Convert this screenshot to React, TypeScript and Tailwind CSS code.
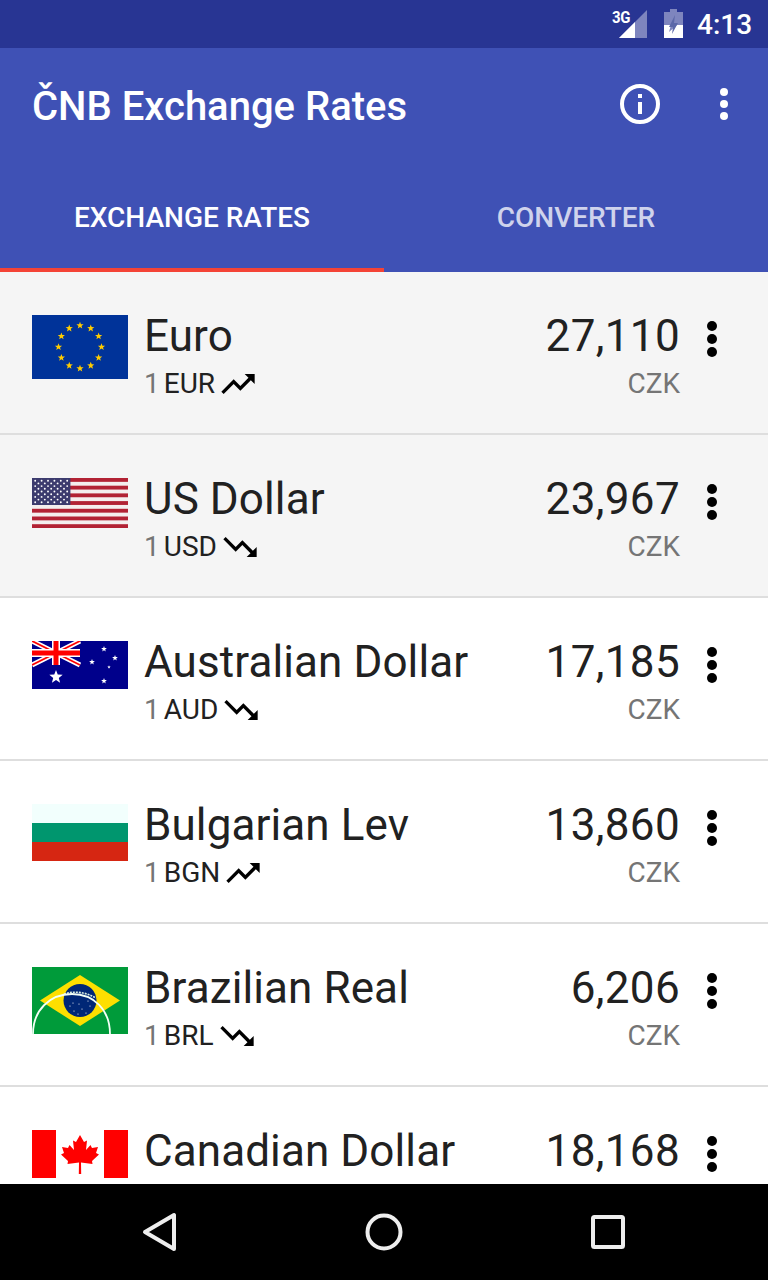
import React from 'react';

type Rate = {
  name: string;
  code: string;
  value: string;
  up: boolean;
  flag: React.ReactNode;
};

const star = (cx: number, cy: number, r: number) => {
  const pts: string[] = [];
  for (let i = 0; i < 10; i++) {
    const rad = i % 2 === 0 ? r : r * 0.42;
    const a = (Math.PI / 5) * i - Math.PI / 2;
    pts.push(`${(cx + rad * Math.cos(a)).toFixed(2)},${(cy + rad * Math.sin(a)).toFixed(2)}`);
  }
  return pts.join(' ');
};

const EuFlag = () => (
  <svg width="96" height="64" viewBox="0 0 96 64" className="block">
    <rect width="96" height="64" fill="#003399" />
    {Array.from({ length: 12 }).map((_, i) => {
      const a = (Math.PI / 6) * i;
      return <polygon key={i} points={star(48 + 21.5 * Math.sin(a), 32 - 21.5 * Math.cos(a), 3.8)} fill="#ffcc00" />;
    })}
  </svg>
);

const UsFlag = () => (
  <svg width="96" height="50" viewBox="0 0 96 50" className="block">
    <rect width="96" height="50" fill="#f4eeee" />
    {[0, 1, 2, 3, 4, 5, 6].map((i) => (
      <rect key={i} x="0" y={i * 7.7} width="96" height="3.85" fill="#b22234" />
    ))}
    <rect width="38.4" height="27" fill="#3c3b6e" />
    {Array.from({ length: 9 }).map((_, r) =>
      Array.from({ length: r % 2 === 0 ? 6 : 5 }).map((_, c) => (
        <circle key={`${r}-${c}`} cx={(r % 2 === 0 ? 3.2 : 6.4) + c * 6.4} cy={2.7 + r * 2.7} r="0.95" fill="#ffffff" />
      )),
    )}
  </svg>
);

const AuFlag = () => (
  <svg width="96" height="48" viewBox="0 0 96 48" className="block">
    <rect width="96" height="48" fill="#00008b" />
    <path d="M0 0L48 24M48 0L0 24" stroke="#ffffff" strokeWidth="5" />
    <path d="M0 0L48 24M48 0L0 24" stroke="#ff0000" strokeWidth="1.8" />
    <path d="M24 0V24M0 12H48" stroke="#ffffff" strokeWidth="8" />
    <path d="M24 0V24M0 12H48" stroke="#ff0000" strokeWidth="5" />
    <polygon points={star(24, 36, 7)} fill="#ffffff" />
    <polygon points={star(72, 8, 3)} fill="#ffffff" />
    <polygon points={star(60, 21, 3)} fill="#ffffff" />
    <polygon points={star(83, 17, 3)} fill="#ffffff" />
    <polygon points={star(77, 26, 1.8)} fill="#ffffff" />
    <polygon points={star(72, 40, 3)} fill="#ffffff" />
  </svg>
);

const BgFlag = () => (
  <svg width="96" height="57" viewBox="0 0 96 57" className="block">
    <rect width="96" height="19" fill="#f2fffd" />
    <rect y="19" width="96" height="19" fill="#00966e" />
    <rect y="38" width="96" height="19" fill="#d62612" />
  </svg>
);

const BrFlag = () => (
  <svg width="96" height="67" viewBox="0 0 96 67" className="block">
    <rect width="96" height="67" fill="#009b3a" />
    <polygon points="48,8 88,33.5 48,59 8,33.5" fill="#fedf00" />
    <circle cx="48" cy="33.5" r="16.5" fill="#002776" />
    <path d="M32 27Q48 22 64 31" stroke="#d8eee0" strokeWidth="1.6" fill="none" strokeDasharray="2 1" />
    <path d="M1 67C1 43 18 27 40 27C62 27 78 43 78 67" stroke="#f2fff6" strokeWidth="1.8" fill="none" />
    {[[38, 39], [42, 44], [47, 37], [50, 42], [54, 46], [58, 39], [46, 47], [41, 36], [56, 34]].map(([x, y], i) => (
      <circle key={i} cx={x} cy={y} r="0.6" fill="#ffffff" />
    ))}
  </svg>
);

const CaFlag = () => (
  <svg width="96" height="48" viewBox="0 0 96 48" className="block">
    <rect width="96" height="48" fill="#ffffff" />
    <rect width="24" height="48" fill="#ff0000" />
    <rect x="72" width="24" height="48" fill="#ff0000" />
    <path
      d="M48 5L52 12L55 10.5L54 20L58.5 15L60 18L66 17L64 23L67 24.5L60 31L60.5 34L49 32.5L49.2 44H46.8L47 32.5L35.5 34L36 31L29 24.5L32 23L30 17L36 18L37.5 15L42 20L41 10.5L44 12Z"
      fill="#ff0000"
    />
  </svg>
);

const TrendIcon = ({ up }: { up: boolean }) => (
  <svg width="40" height="40" viewBox="0 0 24 24" fill="#000000" className="ml-[3px] -my-2 shrink-0">
    {up ? (
      <path d="M16 6l2.29 2.29-4.88 4.88-4-4L2 16.59 3.41 18l6-6 4 4 6.3-6.29L22 12V6z" />
    ) : (
      <path d="M16 18l2.29-2.29-4.88-4.88-4 4L2 7.41 3.41 6l6 6 4-4 6.3 6.29L22 12v6z" />
    )}
  </svg>
);

const Dots = ({ r, gap }: { r: number; gap: number }) => (
  <svg width={r * 2} height={gap * 2 + r * 2} viewBox={`0 0 ${r * 2} ${gap * 2 + r * 2}`} className="block">
    <circle cx={r} cy={r} r={r} fill="currentColor" />
    <circle cx={r} cy={r + gap} r={r} fill="currentColor" />
    <circle cx={r} cy={r + gap * 2} r={r} fill="currentColor" />
  </svg>
);

const rates: Rate[] = [
  { name: 'Euro', code: 'EUR', value: '27,110', up: true, flag: <EuFlag /> },
  { name: 'US Dollar', code: 'USD', value: '23,967', up: false, flag: <UsFlag /> },
  { name: 'Australian Dollar', code: 'AUD', value: '17,185', up: false, flag: <AuFlag /> },
  { name: 'Bulgarian Lev', code: 'BGN', value: '13,860', up: true, flag: <BgFlag /> },
  { name: 'Brazilian Real', code: 'BRL', value: '6,206', up: false, flag: <BrFlag /> },
  { name: 'Canadian Dollar', code: 'CAD', value: '18,168', up: true, flag: <CaFlag /> },
];

const StatusBar = () => (
  <div className="relative h-12 shrink-0 bg-[#283593] text-white">
    <span className="absolute left-[612px] top-[7px] origin-left scale-x-[0.88] text-[17px] font-bold leading-[20px] tracking-[-0.5px]">
      3G
    </span>
    <svg width="30" height="30" viewBox="0 0 30 30" className="absolute left-[618px] top-[9px]">
      <polygon points="1,29 29,1 29,29" fill="#ffffff" fillOpacity="0.4" />
      <polygon points="1,29 17,13 17,29" fill="#ffffff" />
    </svg>
    <svg width="20" height="30" viewBox="0 0 20 30" className="absolute left-[664px] top-[9px]">
      <path d="M0 3H6V0H13V3H19V29H0Z" fill="#ffffff" fillOpacity="0.4" />
      <path d="M0 16H7L5 23L13 16H19V29H0Z" fill="#ffffff" />
      <path d="M11 6L5 18H9L8 25L14 14H10Z" fill="#5c68a8" />
    </svg>
    <span className="absolute left-[697px] top-[8px] text-[28px] font-medium leading-[34px]">4:13</span>
  </div>
);

const Header = () => (
  <div className="shrink-0 bg-[#3f51b5] text-white">
    <div className="flex h-[112px] items-center pl-8 pt-[6px]">
      <h1 className="flex-1 text-[40px] font-medium leading-[48px]">ČNB Exchange Rates</h1>
      <svg width="44" height="44" viewBox="0 0 44 44" className="mr-[58px] -mt-[6px]">
        <circle cx="22" cy="22" r="18" fill="none" stroke="#ffffff" strokeWidth="4" />
        <rect x="20" y="20" width="4" height="12" fill="#ffffff" />
        <rect x="20" y="12" width="4" height="4" fill="#ffffff" />
      </svg>
      <div className="mr-[40px] -mt-[6px]">
        <Dots r={4} gap={12} />
      </div>
    </div>
    <div className="flex h-[112px]">
      <div className="flex flex-1 items-center justify-center border-b-4 border-[#f44336] pt-[8px] text-[28px] font-medium">
        EXCHANGE RATES
      </div>
      <div className="flex flex-1 items-center justify-center border-b-4 border-transparent pt-[8px] text-[28px] font-medium text-white/75">
        CONVERTER
      </div>
    </div>
  </div>
);

const RateRow = ({ rate, shaded }: { rate: Rate; shaded: boolean }) => (
  <div className={`flex h-[163px] shrink-0 border-b-2 border-[#dedede] pl-8 ${shaded ? 'bg-[#f5f5f5]' : 'bg-white'}`}>
    <div className="w-[112px] shrink-0 pt-[43px]">{rate.flag}</div>
    <div className="flex-1 pt-[36px]">
      <div className="text-[44px] leading-[56px] tracking-[0.1px] text-[#212121]">{rate.name}</div>
      <div className="flex h-[40px] items-center text-[28px] leading-[40px] text-[#212121]">
        <span className="mr-[4px] text-[#757575]">1</span>
        {rate.code}
        <TrendIcon up={rate.up} />
      </div>
    </div>
    <div className="pt-[36px] text-right">
      <div className="text-[44px] leading-[56px] tracking-[0.35px] text-[#212121]">{rate.value}</div>
      <div className="text-[28px] leading-[40px] text-[#757575]">CZK</div>
    </div>
    <div className="w-[88px] shrink-0 pl-[27px] pt-[49px] text-[#000000]">
      <Dots r={5} gap={13} />
    </div>
  </div>
);

const NavBar = () => (
  <div className="flex h-24 shrink-0 items-center justify-between bg-black pl-[142px] pr-[143px]">
    <svg width="36" height="40" viewBox="0 0 36 40">
      <path d="M32 3V37L3 20Z" fill="none" stroke="#eeeeee" strokeWidth="4" strokeLinejoin="round" />
    </svg>
    <svg width="38" height="38" viewBox="0 0 38 38" className="-translate-x-px">
      <circle cx="19" cy="19" r="16.5" fill="none" stroke="#eeeeee" strokeWidth="4" />
    </svg>
    <svg width="34" height="34" viewBox="0 0 34 34">
      <rect x="2" y="2" width="30" height="30" rx="1.5" fill="none" stroke="#eeeeee" strokeWidth="4" />
    </svg>
  </div>
);

export default function App() {
  return (
    <div className="flex h-[1280px] w-[768px] flex-col overflow-hidden bg-white font-['Roboto',sans-serif]">
      <StatusBar />
      <Header />
      <div className="flex min-h-0 flex-1 flex-col overflow-hidden">
        {rates.map((rate, i) => (
          <RateRow key={rate.code} rate={rate} shaded={i < 2} />
        ))}
      </div>
      <NavBar />
    </div>
  );
}
